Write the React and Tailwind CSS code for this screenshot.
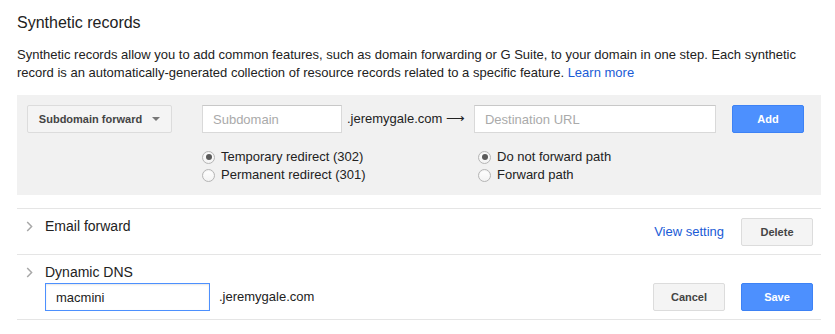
import React from 'react'

function Radio({ checked, label }) {
  return (
    <div className="flex items-center h-[18px] gap-[6px]">
      <span className="w-[13px] h-[13px] rounded-full border border-[#b5b5b5] bg-gradient-to-b from-white to-[#f3f3f3] flex items-center justify-center shadow-[inset_0_1px_1px_rgba(0,0,0,0.05)]">
        {checked && <span className="w-[6px] h-[6px] rounded-full bg-[#5a5a5a]" />}
      </span>
      <span className="text-[13px] text-[#222]">{label}</span>
    </div>
  )
}

function Chevron() {
  return (
    <svg width="7" height="11" viewBox="0 0 7 11" fill="none">
      <polyline points="1.2,1 5.6,5.5 1.2,10" stroke="#a8a8a8" strokeWidth="1.5" />
    </svg>
  )
}

function GrayButton({ children, className = '' }) {
  return (
    <button
      type="button"
      className={`h-[28px] w-[72px] rounded-[2px] border border-[#dcdcdc] bg-[#f4f4f4] text-[11px] font-bold text-[#444] ${className}`}
    >
      {children}
    </button>
  )
}

function BlueButton({ children }) {
  return (
    <button
      type="button"
      className="h-[28px] w-[72px] rounded-[2px] border border-[#3d82f5] bg-[#4d90fe] text-[11px] font-bold text-white"
    >
      {children}
    </button>
  )
}

export default function App() {
  return (
    <div className="w-[835px] h-[334px] bg-white font-['Liberation_Sans',Arial,sans-serif] text-[#222] overflow-hidden">
      <div className="ml-[17px] w-[804px] pt-[13px]">
        <h2 className="text-[16px] leading-[20px] font-normal text-[#222]">Synthetic records</h2>
        <p className="mt-[13px] text-[13px] leading-[18px] text-[#222]">
          Synthetic records allow you to add common features, such as domain forwarding or G Suite, to your domain in one step. Each synthetic
          record is an automatically-generated collection of resource records related to a specific feature.{' '}
          <a href="#" className="text-[#1a5bd6]">Learn more</a>
        </p>

        {/* Add synthetic record panel */}
        <div className="mt-[13px] bg-[#f1f1f1] pl-[10px] pr-[17px] pt-[10px] pb-[11px]">
          <div className="flex items-center h-[28px]">
            <button
              type="button"
              className="w-[145px] h-[28px] flex items-center justify-center gap-[10px] rounded-[2px] border border-[#dcdcdc] bg-[#f4f4f4] text-[11px] font-bold text-[#444]"
            >
              Subdomain forward
              <span className="w-0 h-0 border-l-[4px] border-r-[4px] border-t-[4px] border-l-transparent border-r-transparent border-t-[#777]" />
            </button>
            <input
              placeholder="Subdomain"
              className="ml-[30px] w-[140px] h-[28px] px-[10px] bg-white border border-[#d9d9d9] border-t-[#c8c8c8] text-[13px] placeholder-[#aaa] outline-none"
            />
            <span className="ml-[5px] text-[13px] text-[#222] whitespace-nowrap">.jeremygale.com ⟶</span>
            <input
              placeholder="Destination URL"
              className="ml-[9px] flex-1 min-w-0 h-[28px] px-[10px] bg-white border border-[#d9d9d9] border-t-[#c8c8c8] text-[13px] placeholder-[#aaa] outline-none"
            />
            <div className="ml-[16px]">
              <BlueButton>Add</BlueButton>
            </div>
          </div>
          <div className="flex mt-[15px] pl-[175px]">
            <div className="w-[276px] flex flex-col">
              <Radio checked label="Temporary redirect (302)" />
              <Radio label="Permanent redirect (301)" />
            </div>
            <div className="flex flex-col">
              <Radio checked label="Do not forward path" />
              <Radio label="Forward path" />
            </div>
          </div>
        </div>

        {/* Email forward row */}
        <div className="mt-[13px] border-t border-[#e5e5e5] flex items-start h-[46px]">
          <div className="flex items-center h-[20px] mt-[7px]">
            <div className="w-[28px] pl-[9px] flex items-center">
              <Chevron />
            </div>
            <span className="text-[14px] leading-[20px]">Email forward</span>
          </div>
          <div className="ml-auto mt-[9px] pr-[8px] flex items-center gap-[17px]">
            <a href="#" className="text-[13px] text-[#1a5bd6]">View setting</a>
            <GrayButton>Delete</GrayButton>
          </div>
        </div>

        {/* Dynamic DNS row */}
        <div className="border-t border-b border-[#e5e5e5] pt-[7px] pb-[8px]">
          <div className="flex items-center h-[20px]">
            <div className="w-[28px] pl-[9px] flex items-center">
              <Chevron />
            </div>
            <span className="text-[14px] leading-[20px]">Dynamic DNS</span>
          </div>
          <div className="mt-[1px] flex items-center pl-[28px] pr-[8px]">
            <input
              defaultValue="macmini"
              className="w-[165px] h-[28px] px-[10px] bg-white border border-[#4d90fe] text-[13px] text-[#222] outline-none shadow-[inset_0_1px_2px_rgba(0,0,0,0.1)]"
            />
            <span className="ml-[9px] text-[13px] text-[#222]">.jeremygale.com</span>
            <div className="ml-auto flex items-center gap-[16px]">
              <GrayButton>Cancel</GrayButton>
              <BlueButton>Save</BlueButton>
            </div>
          </div>
        </div>
      </div>
    </div>
  )
}
